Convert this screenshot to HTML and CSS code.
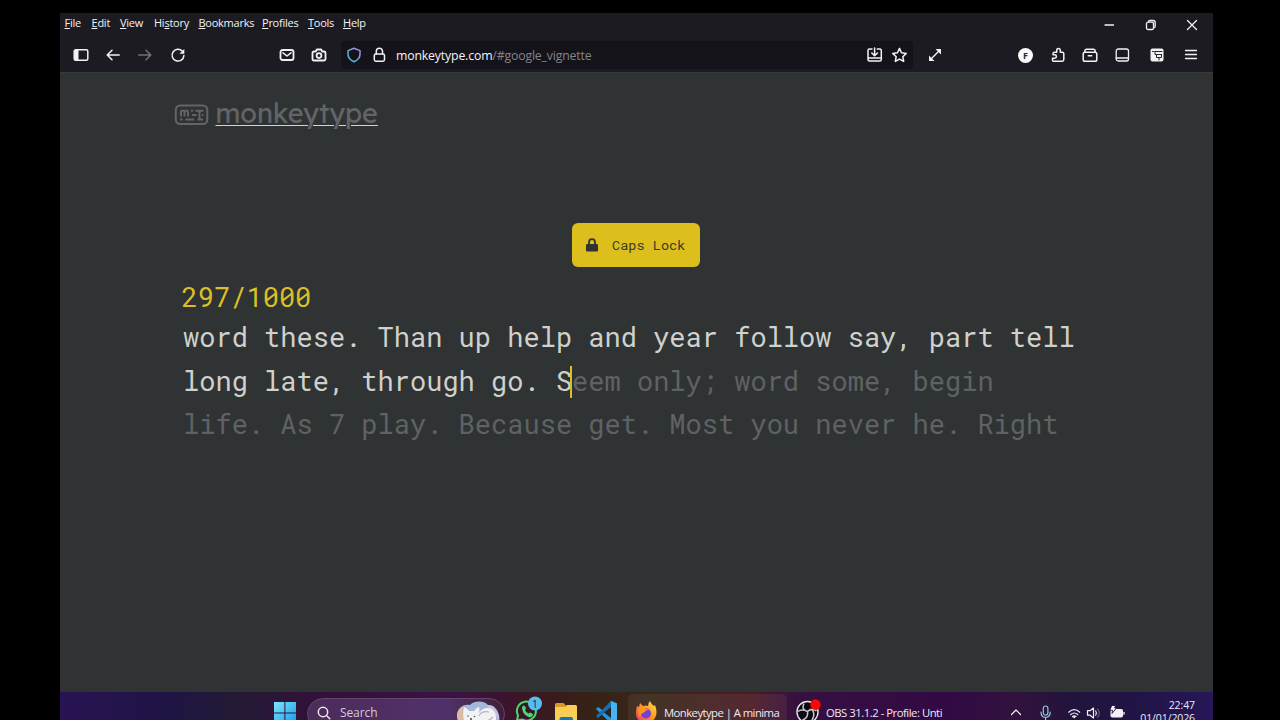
FILE: index.html
```
<!DOCTYPE html>
<html lang="en">
<head>
<meta charset="utf-8">
<title>Monkeytype</title>
<link rel="stylesheet" href="styles.css">
</head>
<body>
<div class="window">
  <header class="chrome">
    <div class="titlebar">
      <nav class="menu">
        <span><u>F</u>ile</span><span><u>E</u>dit</span><span><u>V</u>iew</span><span>Hi<u>s</u>tory</span><span><u>B</u>ookmarks</span><span><u>P</u>rofiles</span><span><u>T</u>ools</span><span><u>H</u>elp</span>
      </nav>
      <div class="controls">
        <svg class="ic" viewBox="0 0 16 16"><path d="M4 8h8.500"/></svg>
        <svg class="ic" viewBox="0 0 16 16"><rect x="3.500" y="5.200" width="7" height="7.300" rx="1.600"/><path d="M5.500 4.800q0-1.300 1.300-1.300H10q2.200 0 2.200 2.200v3.600q0 1-1 1.200"/></svg>
        <svg class="ic" viewBox="0 0 16 16"><path d="M3.500 3.500l9 9M12.500 3.500l-9 9"/></svg>
      </div>
    </div>
    <div class="toolbar">
      <div class="nav-icons">
        <svg class="ic" viewBox="0 0 16 16"><rect x="1.200" y="2.800" width="13.600" height="10.400" rx="1.500"/><path class="solid" d="M1.500 3h4v10h-4z"/></svg>
        <svg class="ic" viewBox="0 0 16 16"><path d="M14.200 8H2.500M7 3.200L2.200 8 7 12.800"/></svg>
        <svg class="ic dim" viewBox="0 0 16 16"><path d="M1.800 8h11.700M9 3.200L13.800 8 9 12.800"/></svg>
        <svg class="ic" viewBox="0 0 16 16"><path d="M12.300 4.100A5.900 5.900 0 1 0 13.900 8.600"/><path class="solid" d="M14.300 2v4.800H9.500z"/></svg>
        <svg class="ic" viewBox="0 0 16 16"><rect class="bold" x="1.500" y="3" width="13" height="10" rx="2"/><path d="M4 5.800l4 3.200 4-3.200"/></svg>
        <svg class="ic" viewBox="0 0 16 16"><path class="bold" d="M1.500 6q0-1.500 1.500-1.500h1.800L5.800 2.500h4.400l1 2H13q1.500 0 1.500 1.500v6q0 1.500-1.500 1.500H3Q1.500 13.500 1.500 12z"/><circle class="bold" cx="8" cy="8.600" r="2.400"/></svg>
      </div>
      <div class="urlbar">
        <svg class="ic shield" viewBox="0 0 16 16"><defs><linearGradient id="sh" x1="1" y1="0" x2="0" y2="1"><stop offset=".2" stop-color="#a98ce0"/><stop offset=".6" stop-color="#55b5e0"/></linearGradient></defs><path stroke="url(#sh)" d="M8 1.300l6 2.300v3.600c0 3.500-2.600 6-6 7.500-3.400-1.500-6-4-6-7.500V3.600z"/></svg>
        <svg class="ic" viewBox="0 0 16 16"><rect x="3.300" y="7" width="10.200" height="7.200" rx="1.600"/><path d="M5.300 7V4.300a3.100 3.100 0 0 1 6.200 0V7"/></svg>
        <span class="url"><b>monkeytype.com</b>/#google_vignette</span>
        <svg class="ic" viewBox="0 0 16 16"><path d="M5 2H2.500Q1 2 1 3.500v9q0 1.500 1.500 1.500h10.300q1.500 0 1.500-1.500v-9q0-1.500-1.500-1.500h-2.500M7.600 1v7.500M4.800 6l2.800 2.800L10.400 6M1 11h13.300"/></svg>
        <svg class="ic" viewBox="0 0 16 16"><path d="M7.500 1.400l2 4.400 4.800.6-3.500 3.300.9 4.700L7.500 12.100l-4.200 2.300.9-4.700L.7 6.400 5.500 5.800z"/></svg>
      </div>
      <div class="tool-icons">
        <svg class="ic" viewBox="0 0 16 16"><path d="M4 12L12 4"/><path class="solid" d="M8.500 2H14v5.500zM2 8.500V14h5.500z"/></svg>
        <span class="avatar">F</span>
        <svg class="ic" viewBox="0 0 16 16"><path d="M3.500 14.200h8.700q1.600 0 1.600-1.600V6.800q0-1.500-1.500-1.500h-2V3.300a1.800 1.800 0 0 0-3.600 0v2H4.500Q3 5.300 3 6.800v1h1.700a1.700 1.700 0 0 1 0 3.400H2.500v1.900q0 1.100 1 1.100"/></svg>
        <svg class="ic" viewBox="0 0 16 16"><rect x="1.200" y="5.200" width="13.600" height="9" rx="1.800"/><path d="M2.800 5V4q0-1.800 1.600-1.800h7.200q1.600 0 1.600 1.800v1M6.300 8.700h3.400"/></svg>
        <svg class="ic thin" viewBox="0 0 16 16"><rect x="2.200" y="2" width="12.300" height="12" rx="2"/><path d="M2.200 11h12.300"/></svg>
        <svg class="ic" viewBox="0 0 16 16"><rect class="solid" x="1.500" y="1.500" width="13" height="13" rx="2"/><path class="dark" d="M3.500 4.500h1M6 4.500h7M6 4.500v3h6.500M7.500 7.500v3h5v-3M10 10.500v2.500"/></svg>
        <svg class="ic thin" viewBox="0 0 16 16"><path d="M2.500 3.500h11M2.500 7.500h11M2.500 11.500h11"/></svg>
      </div>
    </div>
  </header>

  <main class="page">
    <div class="logo">
      <svg class="logo-mark" viewBox="0 0 35 22"><rect x="1.800" y="1.500" width="31.500" height="18.500" rx="4.500"/><path d="M7 12.500V8q0-1.500 1.700-1.500T10.500 8v4.500M10.500 8q0-1.500 1.700-1.500T14 8v4.500M17 6.700h2M21.500 6.700h8M18 11h4.500M25.500 6.700V15M28 11h1.500M6 15.500h2.500M11.500 15.500h8.500M23.500 15.500h5.500"/></svg>
      <span class="logo-text">monkeytype</span>
    </div>
    <div class="caps">
      <svg class="lock" viewBox="0 0 12 14"><rect x="0" y="6" width="12" height="7.500" rx="1.300"/><path d="M3 6.500V4.200a3 3 0 0 1 6 0v2.300"/></svg>
      <span>Caps Lock</span>
    </div>
    <div class="counter">297/1000</div>
    <div class="words">
      <div class="typed">word these. Than up help and year follow say, part tell</div>
      <div><span class="typed">long late, through go. S</span><span class="caret"></span>eem only; word some, begin</div>
      <div>life. As 7 play. Because get. Most you never he. Right</div>
    </div>
  </main>

  <footer class="taskbar">
    <svg class="win" viewBox="0 0 22 22"><defs><linearGradient id="wg" x2="1" y2="1"><stop stop-color="#7fe4fb"/><stop offset="1" stop-color="#139bea"/></linearGradient></defs><path fill="url(#wg)" d="M0 0h10.400v10.400H0zM11.400 0H22v10.400H11.400zM0 11.400h10.400V22H0zM11.400 11.400H22V22H11.400z"/></svg>
    <div class="search">
      <svg class="glass" viewBox="0 0 14 14"><circle cx="6" cy="6" r="4.700"/><path d="M9.500 9.500l3.700 3.700"/></svg>
      <span>Search</span>
      <svg class="fox" viewBox="0 0 46 24"><path fill="#a3b8dc" d="M3 21C-2 11 5 2 14 4 19-1 29 0 32 4c7-1 13 8 11 18z"/><path fill="#dcb9a4" d="M2 20C-1 12 3 6 8 6l-1 16z"/><path fill="#c9bfe0" d="M30 4c7-1 14 7 13 15l-8-9z"/><path fill="#f2f1f4" d="M9 24Q6 15 8 6q3 1 5 4h5q3-4 5-4 1 3 0 6c4-7 14-6 16 0s1 8-1 11z"/><path class="foxline" d="M23 15c1-4 6-5 10-4M22 20c5 1 11 0 15-4"/><circle cx="12" cy="15" r=".8" fill="#555"/><circle cx="18.500" cy="15.500" r=".8" fill="#555"/><circle cx="15" cy="18" r="1" fill="#444"/></svg>
    </div>
    <svg class="wa" viewBox="0 0 30 24"><path class="waring" d="M2 23.500l1-5a9.500 9.500 0 1 1 4 4z"/><path fill="#48da70" d="M7 10q2-3 3.500 0l.5 2-1 1q1 2.500 3.500 3.500l1.500-1 3 1.500q-.5 4-4.500 3Q7 17.500 7 10z"/><circle cx="20" cy="6.500" r="7" fill="#57bdf1"/><text x="20" y="10.500" text-anchor="middle">1</text></svg>
    <svg class="folder" viewBox="0 0 23 18"><path fill="#d99a22" d="M0 1.500Q0 0 1.500 0h7L11 2.500V6H0z"/><path fill="#f8cf53" d="M0 4h10l2-2h8.500Q22 2 22 3.500V18H0z"/><path fill="#1674b8" d="M4.500 18v-2q0-2 2-2h9.500q2 0 2 2v2z"/></svg>
    <svg class="vs" viewBox="0 0 23 22"><path fill="#2497df" d="M16 0l6 2.500V20l-6 2.500L1 8l2-2 5 3.500z"/><path fill="#176fb2" d="M16 0v6L3 17l-2-2z"/><path fill="#2b2418" d="M16 6v11l-7-5.500z"/><path fill="#45b4f2" d="M16 0l6 2.500V20l-6 2.500z"/></svg>
    <div class="task">
      <svg class="ff" viewBox="0 0 22 22"><defs><linearGradient id="fg" x1="1" y1="0" x2="0" y2="1"><stop stop-color="#ffe64a"/><stop offset=".45" stop-color="#ff9b25"/><stop offset="1" stop-color="#f02a6a"/></linearGradient></defs><path fill="url(#fg)" d="M2 5l2 1 1-4 3 3q3-1 5 0 0-3 2-5 1 3 4 5l1-1q3 8 0 13-4 6-10 5Q0 20 1 11q0-3 1-6z"/><circle cx="11" cy="12.500" r="5" fill="#7440d5"/><path fill="#ff9422" d="M5 6q4-1 6 2l3 1q-4 0-4 2-4 1-5 5-4-5 0-10z"/></svg>
      <span>Monkeytype | A minima</span>
    </div>
    <svg class="obs" viewBox="0 0 26 24"><circle cx="11.500" cy="12" r="10.500" fill="#0c0a10" stroke="#e7e5ea" stroke-width="1.400"/><path class="blade" d="M8 3.500q-3 6 3.500 8 4.500-4 9-.5M11.500 11.500Q12.500 18 6.500 20M2 11.500q4-3 9.500 0M16.500 10q3 5-1 11"/><circle cx="19.500" cy="4.500" r="5.200" fill="#fb0505"/></svg>
    <span class="obs-label">OBS 31.1.2 - Profile: Unti</span>
    <div class="tray">
      <svg class="ic" viewBox="0 0 16 16"><path d="M3.500 9.500L8 5l4.500 4.500"/></svg>
      <svg class="ic mic" viewBox="0 0 16 16"><rect x="5.300" y="1" width="4.600" height="9" rx="2.300"/><path d="M3 7q0 5.300 4.600 5.300T12.200 7M7.600 12.300V15"/></svg>
      <svg class="ic" viewBox="0 0 16 16"><path d="M2.700 7.200q5.500-5 11 0M4.700 9.500q3.500-3 7 0M6.500 11.500q1.700-1.400 3.400 0"/><circle class="solid" cx="8.200" cy="12.300" r="1"/></svg>
      <svg class="ic" viewBox="0 0 16 16"><path d="M2.500 5.700v4.500H5l3.500 2.800V3L5 5.700zM10.700 6q1.500 2 0 4.200"/><path class="faint" d="M12.700 4q3 4.200 0 8.200"/></svg>
      <svg class="ic" viewBox="0 0 16 16"><rect class="solid" x="1.500" y="4" width="12.500" height="8.500" rx="1.800"/><path d="M15 7.300v2"/><path class="cut" d="M3 .5h3.500l-.8 2.500H7.500L3 8.500l.6-3.200H1z"/></svg>
    </div>
    <div class="clock"><div>22:47</div><div>01/01/2026</div></div>
  </footer>
</div>
</body>
</html>
```
FILE: styles.css
```
* { box-sizing: border-box; }
body {
  margin: 0;
  width: 1280px;
  height: 720px;
  padding: 13px 67px 0 60px;
  overflow: hidden;
  background: #000;
  font-family: "Segoe UI", "Open Sans", "Noto Sans", sans-serif;
}
svg { display: block; overflow: visible; flex: none; }
.window { height: 707px; display: flex; flex-direction: column; overflow: hidden; }
.chrome { height: 59px; background: #1c1b22; color: #f2f2f5; flex: none; }
.titlebar { height: 24px; display: flex; justify-content: space-between; }
.menu {
  display: grid;
  grid-template-columns: 27px 28.500px 34px 44.500px 63.500px 46px 35px 30px;
  padding-left: 4.500px;
  font-size: 11px;
  line-height: 20px;
  letter-spacing: -0.250px;
  white-space: nowrap;
}
.menu u { text-underline-offset: 1px; }
.controls { display: flex; gap: 25.500px; padding: 4px 13px 0 0; }
.ic {
  width: 16px;
  height: 16px;
  fill: none;
  stroke: #f2f2f5;
  stroke-width: 1.500;
  stroke-linecap: round;
  stroke-linejoin: round;
}
.controls .ic, .thin { stroke-width: 1.300; }
.ic .solid { fill: #f2f2f5; stroke: none; }
.ic .bold { stroke-width: 1.800; }
.ic .dark { stroke: #25242b; stroke-width: 1; }
.ic .faint { stroke: #68616f; }
.ic .cut { fill: #f2f2f5; stroke: #21143c; stroke-width: .9; }
.dim { opacity: .4; }
.toolbar { height: 36px; display: flex; align-items: center; }
.nav-icons {
  display: grid;
  grid-template-columns: 32px 32px 33px 109px 32px 30px;
  padding-left: 13px;
}
.urlbar {
  display: flex;
  align-items: center;
  width: 572px;
  height: 28px;
  padding: 0 5px;
  border-radius: 4px;
  background: #14131a;
}
.shield { margin-right: 9px; }
.url { margin: 1px 0 0 9px; flex: 1; font-size: 12.300px; letter-spacing: -0.170px; color: #85848b; white-space: nowrap; }
.url b { color: #f4f4f7; font-weight: 400; }
.urlbar .url + .ic { margin-right: 9px; }
.tool-icons {
  display: grid;
  grid-template-columns: 90px 33px 32px 32px 35px 34px 16px;
  align-items: center;
  padding-left: 14px;
}
.avatar {
  width: 15px;
  height: 15px;
  margin-left: 1px;
  border-radius: 50%;
  background: #fafafa;
  color: #27262c;
  font-size: 9px;
  font-weight: 700;
  line-height: 15px;
  text-align: center;
}
.page {
  height: 619px;
  flex: none;
  padding-top: 22px;
  background: #303334;
  border-top: 1px solid #39383c;
  font-family: "Roboto Mono", "DejaVu Sans Mono", monospace;
}
.logo {
  display: flex;
  align-items: center;
  height: 36px;
  padding-left: 114px;
  color: #626568;
}
.logo-mark {
  width: 35px;
  height: 22px;
  margin-top: 4px;
  fill: none;
  stroke: #626568;
  stroke-width: 2;
}
.logo-text {
  margin-left: 6.500px;
  font: 27px/36px "Lexend Deca", Lexend, Inter, sans-serif;
  text-decoration: underline;
  text-decoration-color: #d2d3ce;
  text-decoration-thickness: 1.400px;
  text-underline-offset: 2px;
}
.caps {
  display: flex;
  align-items: center;
  width: 128px;
  height: 44px;
  margin: 92px 0 0 512px;
  padding-left: 14px;
  border-radius: 6px;
  background: #dcbf1c;
  color: #3b3929;
  font-size: 13.600px;
  white-space: nowrap;
}
.lock { width: 12px; height: 14px; margin-right: 14px; fill: #303334; }
.lock path { fill: none; stroke: #303334; stroke-width: 1.800; }
.counter {
  height: 44px;
  margin: 8px 0 0 121.500px;
  color: #dcbf28;
  font-size: 27.050px;
  line-height: 44px;
}
.words {
  margin: -4px 0 0 123px;
  color: #5f6264;
  font-size: 27.020px;
  line-height: 43.700px;
  white-space: nowrap;
}
.typed { color: #d0d1cc; }
.caret {
  display: inline-block;
  width: 2px;
  height: 32px;
  margin: 0 0 0 -2px;
  vertical-align: -7px;
  background: #dcbf1c;
}
.words div { height: 43.700px; }
.taskbar {
  display: flex;
  align-items: flex-start;
  height: 29px;
  overflow: hidden;
  color: #eeeaf2;
  font-size: 12px;
  line-height: 18px;
  white-space: nowrap;
  border-top: 1px solid #3a2940;
  background: linear-gradient(90deg, #281353 0, #201446 9%, #221a35 15%, #34103a 23%, #3b1245 34%, #3c1526 40%, #352315 46%, #3a2719 52%, #4b1b25 60%, #361040 64%, #310a45 77%, #31123d 83%, #21143c 88%, #211448 94%, #271758 100%);
}
.win { width: 22px; height: 22px; margin: 10px 0 0 214px; }
.search {
  display: flex;
  width: 198px;
  height: 32px;
  margin: 6px 0 0 11px;
  padding: 5px 0 0 11px;
  border-radius: 16px;
  border: 1px solid #62466e;
  background: linear-gradient(90deg, #4c2c58, #51316b 70%, #3d2035);
  color: #d5cbdc;
}
.glass { width: 14px; height: 14px; margin: 2px 9px 0 -2px; fill: none; stroke: #eee8f2; stroke-width: 1.500; }
.search span { width: 39px; letter-spacing: -0.100px; }
.fox { width: 46px; height: 24px; margin: -3px 0 0 77px; }
.foxline { fill: none; stroke: #b6afc0; stroke-width: 1.100; }
.wa { width: 30px; height: 24px; margin: 5px 0 0 10px; }
.wa text { font-size: 11px; fill: #173047; }
.waring { fill: none; stroke: #48da70; stroke-width: 2; }
.folder { width: 23px; height: 18px; margin: 11px 0 0 10px; }
.vs { width: 23px; height: 22px; margin: 9px 0 0 17px; }
.task {
  display: flex;
  width: 159px;
  height: 34px;
  margin: 2px 0 0 10px;
  padding: 9px 0 0 7px;
  border-radius: 5px;
  background: rgba(255, 255, 255, .06);
}
.ff { width: 22px; height: 22px; margin: -2px 7px 0 0; }
.task span { font-size: 11.300px; letter-spacing: -0.550px; margin-top: 1px; }
.obs { width: 26px; height: 24px; margin: 8px 0 0 9px; }
.blade { fill: none; stroke: #c9c6ce; stroke-width: 1.500; }
.obs-label { width: 130px; margin: 12px 0 0 4px; font-size: 11.300px; letter-spacing: -0.480px; }
.tray {
  display: grid;
  grid-template-columns: 29.500px 28.500px 19px 24px 16px;
  margin: 13px 0 0 52px;
}
.tray .ic { stroke-width: 1.200; }
.tray .mic { stroke: #8ec8d2; }
.clock { width: 70px; margin: 7px 0 0 0; text-align: right; font-size: 10.500px; line-height: 13px; letter-spacing: -0.100px; }
```
